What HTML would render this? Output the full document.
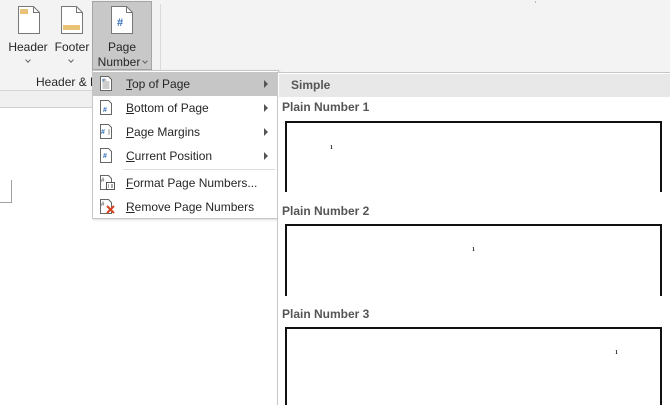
<!DOCTYPE html><html><head><style>
*{margin:0;padding:0;box-sizing:border-box}
body{width:670px;height:405px;overflow:hidden;position:relative;background:#fff;font-family:"Liberation Sans",sans-serif;font-size:12px;color:#262626}
.a{position:absolute}
.ribbon{left:0;top:0;width:670px;height:91px;background:#f3f3f3;border-bottom:1px solid #d5d5d5}
.strip{left:0;top:91px;width:670px;height:17px;background:#f0f0f0;border-bottom:1px solid #d0d0d0}
.lbl{font-size:12px;color:#262626;text-align:center}
.mi{position:absolute;left:0;width:184px;height:24px;line-height:24px;padding-left:33px;font-size:12px}
.mi u{text-decoration:underline}
.arr{position:absolute;right:9px;top:8px;width:0;height:0;border-left:4px solid #555;border-top:4px solid transparent;border-bottom:4px solid transparent}
.ic{position:absolute;left:7px;top:4px}
.pl{font-weight:bold;color:#555;font-size:12px;left:282px}
.box{left:285px;width:377px;border:2px solid #111;border-bottom:none;background:#fff}
.one{font-size:6px;font-weight:bold;position:absolute;font-family:"Liberation Serif",serif}
.chev{position:absolute;width:4px;height:4px;border-right:1px solid #666;border-bottom:1px solid #666;transform:rotate(45deg)}
</style></head><body>
<div class="a ribbon"></div>
<div class="a strip"></div>
<div class="a" style="left:160px;top:4px;width:1px;height:84px;background:#dadada"></div>
<div class="a" style="left:535px;top:1px;width:1px;height:2px;background:#bbb"></div>
<svg class="a" style="left:17px;top:5px" width="24" height="30"><path d="M1.5 1.5h15l6 6v21h-21z" fill="#fff" stroke="#777"/><path d="M16.5 1.5v6h6" fill="none" stroke="#777"/><rect x="3" y="4" width="8" height="5" fill="#e8c277"/></svg>
<div class="a lbl" style="left:6px;top:40px;width:44px">Header</div>
<div class="chev" style="left:26px;top:58px"></div>
<svg class="a" style="left:60px;top:5px" width="24" height="30"><path d="M1.5 1.5h15l6 6v21h-21z" fill="#fff" stroke="#777"/><path d="M16.5 1.5v6h6" fill="none" stroke="#777"/><rect x="3" y="20" width="17" height="5" fill="#e8c277"/></svg>
<div class="a lbl" style="left:51px;top:40px;width:42px">Footer</div>
<div class="chev" style="left:69px;top:58px"></div>
<div class="a" style="left:92px;top:1px;width:60px;height:69px;background:#c8c8c8;border:1px solid #a5a5a5"></div>
<svg class="a" style="left:110px;top:5px" width="24" height="30"><path d="M1.5 1.5h15l6 6v21h-21z" fill="#fff" stroke="#777"/><path d="M16.5 1.5v6h6" fill="none" stroke="#777"/><text x="7" y="21" font-size="11" font-weight="bold" fill="#2f6db5" font-family="Liberation Sans">#</text></svg>
<div class="a lbl" style="left:92px;top:40px;width:60px">Page</div>
<div class="a lbl" style="left:94px;top:55px;width:50px">Number</div>
<div class="chev" style="left:143px;top:59px"></div>
<div class="a lbl" style="left:36px;top:75px;width:80px;text-align:left">Header &amp; F</div>
<div class="a" style="left:0;top:180px;width:12px;height:23px;border-right:1px solid #a0a0a0;border-bottom:1px solid #a0a0a0"></div>
<div class="a" style="left:92px;top:70px;width:187px;height:149px;background:#fff;border:1px solid #c6c6c6;box-shadow:1px 1px 2px rgba(0,0,0,.15)">
 <div class="mi" style="top:1px;background:#c6c6c6"><svg class="ic" width="12" height="15"><path d="M.5 .5h8l3 3v11H.5z" fill="#fff" stroke="#666"/><path d="M2.5 4h4M2.5 6h7M2.5 8h7M2.5 10h7M2.5 12h7" stroke="#999"/><text x="2" y="6" font-size="5" fill="#2f6db5">#</text></svg><u>T</u>op of Page<span class="arr"></span></div>
 <div class="mi" style="top:25px"><svg class="ic" width="12" height="15"><path d="M.5 .5h8l3 3v11H.5z" fill="#fff" stroke="#666"/><text x="3" y="12" font-size="7" fill="#2f6db5" font-weight="bold">#</text></svg><u>B</u>ottom of Page<span class="arr"></span></div>
 <div class="mi" style="top:49px"><svg class="ic" width="12" height="15"><path d="M.5 .5h8l3 3v11H.5z" fill="#fff" stroke="#666"/><text x="1" y="10" font-size="7" fill="#2f6db5" font-weight="bold">#</text><path d="M8 6h2M8 8h2M8 10h2" stroke="#999"/></svg><u>P</u>age Margins<span class="arr"></span></div>
 <div class="mi" style="top:73px"><svg class="ic" width="12" height="15"><path d="M.5 .5h8l3 3v11H.5z" fill="#fff" stroke="#666"/><text x="3" y="10" font-size="7" fill="#2f6db5" font-weight="bold">#</text></svg><u>C</u>urrent Position<span class="arr"></span></div>
 <div class="a" style="left:30px;top:98px;width:152px;height:1px;background:#ddd"></div>
 <div class="mi" style="top:100px"><svg class="ic" width="16" height="16"><path d="M.5 .5h8l3 3v11H.5z" fill="#fff" stroke="#666"/><text x="1" y="7" font-size="6" fill="#333">#</text><rect x="6.5" y="7.5" width="8" height="7" fill="#fff" stroke="#555"/><path d="M8 10h1M11 10h2M8 12h1M11 12h2" stroke="#555"/></svg><u>F</u>ormat Page Numbers...</div>
 <div class="mi" style="top:124px"><svg class="ic" width="16" height="16"><path d="M.5 .5h8l3 3v11H.5z" fill="#fff" stroke="#666"/><text x="1" y="7" font-size="6" fill="#333">#</text><path d="M7 7l7 7M14 7l-7 7" stroke="#d9401e" stroke-width="2"/></svg><u>R</u>emove Page Numbers</div>
</div>
<div class="a" style="left:277px;top:72px;width:393px;height:333px;background:#fff;border-left:1px solid #c6c6c6;border-top:1px solid #c6c6c6"></div>
<div class="a" style="left:279px;top:74px;width:391px;height:23px;background:#e8e8e8"></div>
<div class="a" style="left:291px;top:78px;font-weight:bold;color:#555">Simple</div>
<div class="a pl" style="top:100px">Plain Number 1</div>
<div class="a box" style="top:121px;height:71px"><span class="one" style="left:43px;top:22px">1</span></div>
<div class="a pl" style="top:204px">Plain Number 2</div>
<div class="a box" style="top:224px;height:72px"><span class="one" style="left:185px;top:21px">1</span></div>
<div class="a pl" style="top:307px">Plain Number 3</div>
<div class="a box" style="top:327px;height:78px"><span class="one" style="left:328px;top:21px">1</span></div>
</body></html>
